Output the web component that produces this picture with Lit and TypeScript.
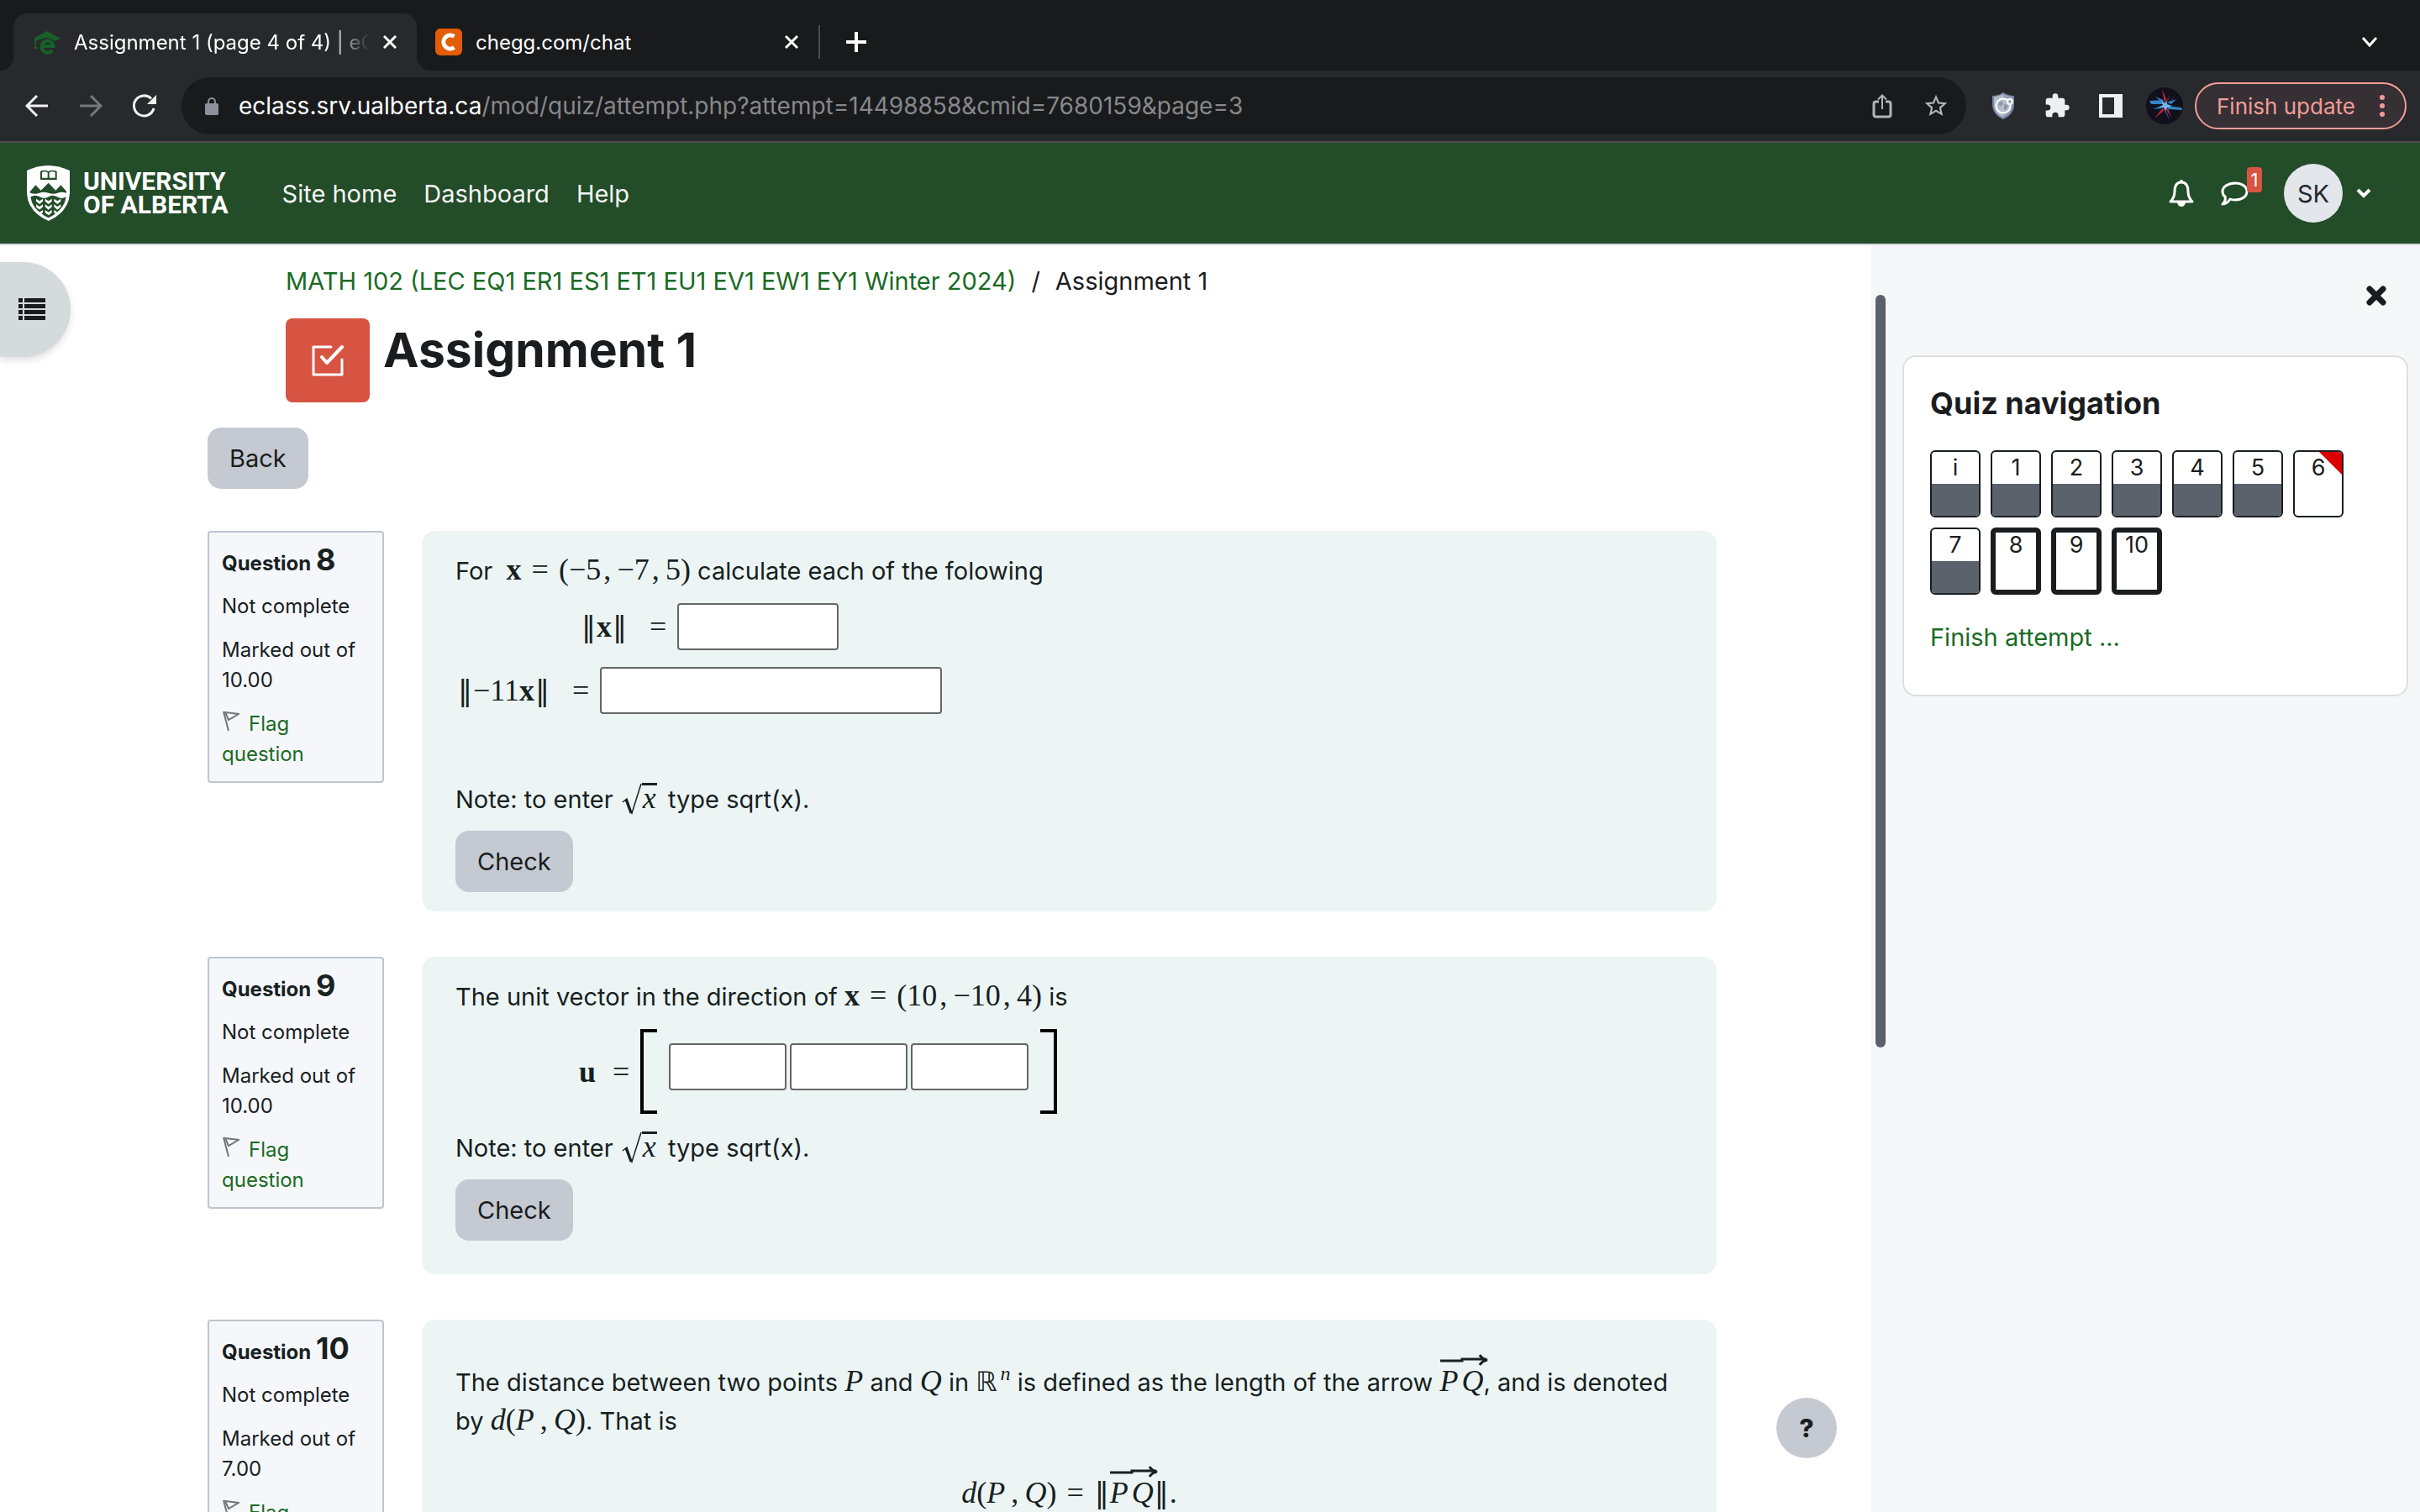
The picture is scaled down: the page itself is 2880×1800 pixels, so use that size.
import { LitElement, html, css, svg } from "lit";
import { customElement, property } from "lit/decorators.js";
import { classMap } from "lit/directives/class-map.js";

const controls = css`
  * {
    box-sizing: border-box;
  }
  button,
  input {
    font: inherit;
    color: inherit;
    margin: 0;
  }
  button {
    border: 0;
    padding: 0;
    background: none;
    cursor: pointer;
  }
  a {
    color: #196b24;
    text-decoration: none;
  }
  svg {
    display: block;
    flex: none;
  }
  .button {
    height: 73px;
    padding: 0 26px;
    border-radius: 16px;
    background: #c4c9d2;
    color: #1a1d20;
    font-size: 29px;
  }
`;

/* ---------- Browser chrome ---------- */

@customElement("browser-bar")
class BrowserBar extends LitElement {
  static styles = [
    controls,
    css`
      :host {
        display: block;
        background: #28292c;
        border-bottom: 2px solid #4e4d52;
        color: #fff;
      }
      .strip {
        display: flex;
        align-items: center;
        height: 84px;
        padding: 16px 50px 0 16px;
        background: #191a1c;
      }
      .tab {
        display: flex;
        align-items: center;
        gap: 16px;
        width: 478px;
        height: 68px;
        padding: 0 24px 0 22px;
        font-size: 24px;
        position: relative;
      }
      .tab.active {
        width: 480px;
        padding-left: 24px;
        background: #28292c;
        border-radius: 16px 16px 0 0;
      }
      .tab.active::before,
      .tab.active::after {
        content: "";
        position: absolute;
        bottom: 0;
        width: 16px;
        height: 16px;
      }
      .tab.active::before {
        left: -16px;
        background: radial-gradient(circle at 0 0, transparent 16px, #28292c 16px);
      }
      .tab.active::after {
        right: -16px;
        background: radial-gradient(circle at 100% 0, transparent 16px, #28292c 16px);
      }
      .label {
        flex: 1;
        overflow: hidden;
        white-space: nowrap;
      }
      .active .label {
        mask-image: linear-gradient(90deg, #000 86%, transparent 100%);
      }
      .divider {
        width: 2px;
        height: 40px;
        background: #4a4b4e;
      }
      .new {
        margin-left: 30px;
      }
      .more {
        margin-left: auto;
      }
      .bar {
        display: flex;
        align-items: center;
        height: 84px;
        padding: 0 16px 0 30px;
      }
      .nav {
        display: flex;
        gap: 36px;
        margin-right: 30px;
      }
      .address {
        flex: 1;
        display: flex;
        align-items: center;
        height: 68px;
        padding: 0 20px 0 28px;
        border-radius: 34px;
        background: #191a1c;
        font-size: 28px;
        white-space: nowrap;
      }
      .url {
        flex: 1;
        margin-left: 24px;
        color: #86888b;
      }
      .host {
        color: #fff;
      }
      .star {
        margin-left: 36px;
      }
      .extensions {
        display: flex;
        align-items: center;
        gap: 34px;
        margin-left: 30px;
      }
      .me {
        margin: 0 14px 0 -6px;
      }
      .update {
        display: flex;
        align-items: center;
        justify-content: space-between;
        width: 252px;
        height: 56px;
        padding: 0 24px;
        border: 2px solid #f29c97;
        border-radius: 28px;
        background: #363034;
        color: #f29c97;
        font-size: 26px;
      }
      .group {
        display: flex;
        align-items: center;
      }
    `,
  ];

  private cross() {
    return html`<svg width="16" height="16" viewBox="0 0 16 16">
      <path d="M1 1 15 15M15 1 1 15" stroke="#fff" stroke-width="3" />
    </svg>`;
  }

  render() {
    return html`
      <div class="strip" role="tablist">
        <div class="tab active" role="tab" aria-selected="true">
          <svg width="32" height="32" viewBox="0 0 32 32">
            <path d="M1 11 16 3 32 12 25 15Q16 8 8 13L3 14V20H1Z" fill="#176128" />
            <path d="M1 21h3v3H1z" fill="#176128" />
            <path d="M22 26A7 7 0 1 1 23.500 21H10" fill="none" stroke="#176128" stroke-width="4" />
          </svg>
          <span class="label">Assignment 1 (page 4 of 4) | eClass</span>
          <button aria-label="Close tab">${this.cross()}</button>
        </div>
        <div class="tab" role="tab" aria-selected="false">
          <svg width="32" height="32" viewBox="0 0 32 32">
            <rect width="32" height="32" rx="6" fill="#e25d04" />
            <path d="M22.500 9.500A8 8 0 1 0 22.500 22.500" fill="none" stroke="#fff" stroke-width="5" />
          </svg>
          <span class="label">chegg.com/chat</span>
          <button aria-label="Close tab">${this.cross()}</button>
        </div>
        <span class="divider"></span>
        <button class="new" aria-label="New tab">
          <svg width="26" height="26" viewBox="0 0 26 26">
            <path d="M13 1V25M1 13H25" stroke="#fff" stroke-width="4" />
          </svg>
        </button>
        <button class="more" aria-label="Search tabs">
          <svg width="20" height="14" viewBox="0 0 20 14">
            <path d="M2 2 10 11 18 2" fill="none" stroke="#fff" stroke-width="3" />
          </svg>
        </button>
      </div>
      <div class="bar">
        <div class="nav">
          <button aria-label="Back">
            <svg width="28" height="28" viewBox="0 0 28 28">
              <path d="M27 14H3M14 2 2 14 14 26" fill="none" stroke="#f1f2f4" stroke-width="3" />
            </svg>
          </button>
          <button aria-label="Forward">
            <svg width="28" height="28" viewBox="0 0 28 28">
              <path d="M1 14H25M14 2 26 14 14 26" fill="none" stroke="#77787b" stroke-width="3" />
            </svg>
          </button>
          <button aria-label="Reload">
            <svg width="28" height="28" viewBox="0 0 28 28">
              <path d="M25 17A12 12 0 1 1 22 5.500" fill="none" stroke="#f1f2f4" stroke-width="3" />
              <path d="M28 1V12H17Z" fill="#f1f2f4" />
            </svg>
          </button>
        </div>
        <div class="address">
          <svg width="16" height="22" viewBox="0 0 16 22">
            <rect y="8" width="16" height="14" rx="2" fill="#8b9099" />
            <path d="M4 9V6a4 4 0 0 1 8 0V9" fill="none" stroke="#8b9099" stroke-width="2" />
          </svg>
          <span class="url" role="textbox" aria-label="Address"
            ><span class="host">eclass.srv.ualberta.ca</span
            >/mod/quiz/attempt.php?attempt=14498858&amp;cmid=7680159&amp;page=3</span
          >
          <button aria-label="Share">
            <svg width="24" height="30" viewBox="0 0 24 30">
              <g fill="none" stroke="#b4b4b5" stroke-width="3">
                <path d="M8 10H4.500Q2 10 2 12.500V25.500Q2 28 4.500 28H19.500Q22 28 22 25.500V12.500Q22 10 19.500 10H16" />
                <path d="M12 19V3M7 7.500 12 2.500 17 7.500" stroke-width="2" />
              </g>
            </svg>
          </button>
          <button class="star" aria-label="Bookmark this tab">
            <svg width="32" height="32" viewBox="0 0 24 24">
              <path
                fill="#b4b4b5"
                d="M22 9.240l-7.190-.620L12 2 9.190 8.630 2 9.240l5.460 4.730L5.820 21 12 17.270 18.180 21l-1.630-7.030L22 9.240zM12 15.400l-3.760 2.270 1-4.280-3.320-2.880 4.380-.380L12 6.100l1.710 4.040 4.380.380-3.320 2.880 1 4.280L12 15.400z"
              />
            </svg>
          </button>
        </div>
        <div class="extensions">
          <svg width="28" height="32" viewBox="0 0 28 32">
            <path d="M14 0Q20 4 27 4V14Q27 26 14 32 1 26 1 14V4Q8 4 14 0Z" fill="#7785a3" />
            <path d="M14 2Q19 5 25 5.500V14Q25 25 14 30Z" fill="#9ba5b8" />
            <path d="M14 2Q9 5 3 5.500V14Q3 25 14 30Z" fill="#b6bcc9" />
            <circle cx="14" cy="16" r="8.500" fill="#b9bfca" stroke="#fff" stroke-width="2" />
            <path d="M8 14Q10 9 14 11L13 15 10 17ZM15 14 20 15 18 20 15 21Z" fill="#8f99ad" />
            <circle cx="22" cy="11" r="3" fill="#9ba5b8" stroke="#fff" stroke-width="2" />
          </svg>
          <svg width="32" height="32" viewBox="0 0 24 24">
            <path
              fill="#eeeff2"
              d="M20.500 11H19V7c0-1.100-.9-2-2-2h-4V3.500a2.500 2.500 0 0 0-5 0V5H4c-1.100 0-2 .9-2 2v3.800h1.500a2.700 2.700 0 0 1 0 5.400H2V20c0 1.100.9 2 2 2h3.800v-1.500a2.700 2.700 0 0 1 5.400 0V22H17c1.100 0 2-.9 2-2v-4h1.500a2.500 2.500 0 0 0 0-5z"
            />
          </svg>
          <svg width="28" height="28" viewBox="0 0 28 28">
            <path fill="#eeeff2" fill-rule="evenodd" d="M0 0H28V28H0ZM4 4V24H18V4Z" />
          </svg>
          <div class="group">
            <svg class="me" width="44" height="44" viewBox="0 0 44 44">
              <circle cx="22" cy="22" r="22" fill="#10101b" />
              <path d="M19 2 24 14 22 20ZM36 8 28 18 25 20ZM10 37 20 24 21 28ZM30 36 26 24 24 26Z" fill="#c2203a" />
              <path d="M4 16 20 15 22 20 6 20ZM11 11 20 15 21 20ZM25 18 36 14 30 20ZM24 22 42 24 43 27 27 26ZM8 26 20 21 18 25Z" fill="#2f86c8" />
              <path d="M18 16 22 19 25 16 25 20 31 22 25 24 23 29 21 24 16 24 20 21Z" fill="#74b6e6" />
              <path d="M24 26 28 40 22 28ZM26 16 29 8 24 16Z" fill="#3a3f6b" />
            </svg>
            <button class="update">
              Finish update
              <svg width="6" height="26" viewBox="0 0 6 26">
                <g fill="#f29c97">
                  <circle cx="3" cy="3" r="3" />
                  <circle cx="3" cy="13" r="3" />
                  <circle cx="3" cy="23" r="3" />
                </g>
              </svg>
            </button>
          </div>
        </div>
      </div>
    `;
  }
}

/* ---------- Site header ---------- */

@customElement("site-header")
class SiteHeader extends LitElement {
  static styles = [
    controls,
    css`
      :host {
        display: flex;
        align-items: center;
        height: 122px;
        padding: 0 58px 0 32px;
        background: #234c29;
        border-bottom: 2px solid #d5dadd;
        color: #fff;
      }
      .brand {
        display: flex;
        align-items: center;
        gap: 16px;
        color: #fff;
        font: 700 30px/28px Roboto, sans-serif;
      }
      nav {
        display: flex;
        gap: 32px;
        margin-left: 64px;
        font-size: 29px;
      }
      nav a {
        color: #f4f6f4;
      }
      .tools {
        display: flex;
        align-items: center;
        margin-left: auto;
      }
      .chat {
        position: relative;
        margin: 0 42px 0 30px;
      }
      .badge {
        position: absolute;
        left: 32px;
        top: -15px;
        width: 18px;
        height: 30px;
        border-radius: 4px;
        background: #d75442;
        font-size: 22px;
        line-height: 30px;
        text-align: center;
      }
      .user {
        display: flex;
        align-items: center;
        gap: 16px;
      }
      .initials {
        width: 70px;
        height: 70px;
        border-radius: 50%;
        background: #e3e6eb;
        color: #24292e;
        font-size: 29px;
        line-height: 72px;
      }
    `,
  ];

  private wheat(x: number, rows: number) {
    return Array.from(
      { length: rows },
      (_, i) => svg`<path d="M${x - 12} ${119 + i * 20}l12 8 12-8v9l-12 10-12-10z" fill="#fff"/>`
    );
  }

  render() {
    return html`
      <a class="brand" href="#home">
        <svg width="51" height="66" viewBox="0 0 153 198">
          <path d="M0 18Q38 0 76 0T153 18V100Q150 165 77 198 3 165 0 100Z" fill="#fff" />
          <path d="M48 21Q62 14 77 21 92 14 107 21V51H48Z" fill="#234c29" />
          <path d="M54 24Q64 19 74 25V44H54ZM80 25Q90 19 101 24V44H80Z" fill="#fff" />
          <path d="M12 98V92L31 70 50 89 77 62 103 89 121 70 141 92V98Q124 92 110 98T77 98 45 98 12 98Z" fill="#234c29" />
          <path d="M13 112Q30 102 46 112T77 112 108 112 140 112Q134 160 77 187 19 160 13 112Z" fill="#234c29" />
          ${this.wheat(45, 3)} ${this.wheat(77, 3)} ${this.wheat(109, 3)}
        </svg>
        <span>UNIVERSITY<br />OF ALBERTA</span>
      </a>
      <nav>
        <a href="#site">Site home</a>
        <a href="#dashboard">Dashboard</a>
        <a href="#help">Help</a>
      </nav>
      <div class="tools">
        <button aria-label="Notifications">
          <svg width="32" height="34" viewBox="0 0 32 34">
            <path d="M16 4C9 4 8 10 8 15 8 21 6 24 3 27H29C26 24 24 21 24 15 24 10 23 4 16 4Z" fill="none" stroke="#fff" stroke-width="3" stroke-linejoin="round" />
            <path d="M11 28H21Q20 33 16 33T11 28Z" fill="#fff" />
            <circle cx="16" cy="3" r="2" fill="#fff" />
          </svg>
        </button>
        <button class="chat" aria-label="Messages">
          <svg width="34" height="32" viewBox="0 0 34 32">
            <path d="M18 4C26 4 32 8 32 14S26 24 18 24C16 24 14 24 12 23 10 26 7 29 3 29 6 26 7 23 6 20 3 18 3 16 3 14 3 8 10 4 18 4Z" fill="none" stroke="#fff" stroke-width="3" stroke-linejoin="round" />
          </svg>
          <span class="badge">1</span>
        </button>
        <button class="user" aria-label="User menu">
          <span class="initials">SK</span>
          <svg width="18" height="12" viewBox="0 0 18 12">
            <path d="M2 2 9 9 16 2" fill="none" stroke="#fff" stroke-width="4" />
          </svg>
        </button>
      </div>
    `;
  }
}

/* ---------- Question ---------- */

@customElement("quiz-question")
class QuizQuestion extends LitElement {
  @property() number = "";
  @property() marks = "";

  static styles = [
    controls,
    css`
      :host {
        display: grid;
        grid-template-columns: 210px 1fr;
        column-gap: 45px;
        align-items: start;
      }
      .info {
        padding: 20px 15px 14px;
        border: 2px solid #bec5d0;
        border-radius: 4px;
        background: #f6f7fa;
        font-size: 24px;
        line-height: 36px;
      }
      h3 {
        margin: 0;
        font-size: 24px;
        line-height: 34px;
      }
      .number {
        font-size: 36px;
        line-height: 24px;
      }
      p {
        margin: 16px 0 0;
      }
      .flag {
        display: inline-block;
        margin-right: 11px;
      }
      .body {
        border-radius: 16px;
        background: #ecf5f4;
        padding: 25px 40px 23px;
      }
    `,
  ];

  render() {
    return html`
      <div class="info">
        <h3>Question <span class="number">${this.number}</span></h3>
        <p>Not complete</p>
        <p>Marked out of ${this.marks}</p>
        <p>
          <a href="#flag"
            ><svg class="flag" width="21" height="24" viewBox="0 0 21 24">
              <g fill="none" stroke="#72767b" stroke-width="2">
                <path d="M2 1 8 24" />
                <path d="M4 2 20 4 8 11Z" />
              </g></svg
            >Flag question</a
          >
        </p>
      </div>
      <div class="body"><slot></slot></div>
    `;
  }
}

/* ---------- Quiz navigation drawer ---------- */

type Cell = { label: string; state: "done" | "open" | "flagged" | "current" };

const cells: Cell[] = [
  ...["i", "1", "2", "3", "4", "5"].map((label): Cell => ({ label, state: "done" })),
  { label: "6", state: "flagged" },
  { label: "7", state: "done" },
  ...["8", "9", "10"].map((label): Cell => ({ label, state: "current" })),
];

@customElement("quiz-drawer")
class QuizDrawer extends LitElement {
  static styles = [
    controls,
    css`
      :host {
        display: flex;
        gap: 20px;
        padding: 48px 14px 0 6px;
        background: #f6f7f9;
      }
      .thumb {
        width: 12px;
        height: 896px;
        margin-top: 11px;
        border-radius: 6px;
        background: #5b626b;
      }
      .column {
        flex: 1;
      }
      .close {
        display: block;
        margin: 0 26px 59px auto;
      }
      .card {
        padding: 33px 31px 45px;
        border: 2px solid #dedfe1;
        border-radius: 16px;
        background: #fff;
      }
      h2 {
        margin: 0;
        font-size: 36px;
        line-height: 44px;
      }
      .grid {
        display: grid;
        grid-template-columns: repeat(7, 60px);
        gap: 12px;
        margin: 34px 0 28px;
      }
      .cell {
        position: relative;
        display: flex;
        flex-direction: column;
        height: 80px;
        overflow: hidden;
        border: 2px solid #1a1d20;
        border-radius: 6px;
        background: #fff;
        color: #1a1d20;
        font-size: 27px;
        line-height: 38px;
        text-align: center;
      }
      .done::after {
        content: "";
        flex: 1;
        background: #5b626b;
      }
      .current {
        border-width: 6px;
        line-height: 30px;
      }
      .flagged::after {
        content: "";
        position: absolute;
        top: 0;
        right: 0;
        width: 27px;
        height: 27px;
        background: #dc0000;
        clip-path: polygon(0 0, 100% 0, 100% 100%);
      }
      .finish {
        display: block;
        font-size: 29px;
        line-height: 46px;
      }
    `,
  ];

  render() {
    return html`
      <div class="thumb"></div>
      <div class="column">
        <button class="close" aria-label="Close drawer">
          <svg width="24" height="24" viewBox="0 0 24 24">
            <path d="M4 4 20 20M20 4 4 20" stroke="#1a1d20" stroke-width="7" stroke-linecap="round" />
          </svg>
        </button>
        <section class="card">
          <h2>Quiz navigation</h2>
          <div class="grid">
            ${cells.map(
              (c) => html`<a href="#q${c.label}" class=${classMap({ cell: true, [c.state]: true })}>${c.label}</a>`
            )}
          </div>
          <a class="finish" href="#finish">Finish attempt ...</a>
        </section>
      </div>
    `;
  }
}

/* ---------- Page ---------- */

@customElement("app-root")
class AppRoot extends LitElement {
  static styles = [
    controls,
    css`
      :host {
        display: flex;
        flex-direction: column;
        height: 100vh;
        overflow: hidden;
        background: #fff;
        color: #1a1d20;
        font-family: Inter, "Liberation Sans", sans-serif;
      }
      .page {
        flex: 1;
        min-height: 0;
        display: grid;
        grid-template-columns: 1fr 654px;
        position: relative;
        overflow: hidden;
      }
      .index {
        position: absolute;
        left: 0;
        top: 20px;
        width: 84px;
        height: 113px;
        padding: 0 0 2px 22px;
        border-radius: 0 57px 57px 0;
        background: #d5dadd;
        box-shadow: 0 4px 8px rgba(0, 0, 0, 0.12);
      }
      .help {
        position: absolute;
        right: 694px;
        bottom: 64px;
        width: 72px;
        height: 72px;
        border-radius: 50%;
        background: #c4c9d2;
        font-size: 30px;
        font-weight: 800;
      }
      main {
        min-width: 0;
        overflow: hidden;
        padding: 20px 183px 0 247px;
        font-size: 29px;
        line-height: 46px;
      }
      .heading {
        padding-left: 93px;
      }
      .crumbs {
        display: flex;
        gap: 18px;
        color: #1a1d20;
      }
      .title {
        display: flex;
        gap: 16px;
        margin: 21px 0 30px;
      }
      .icon {
        display: grid;
        place-items: center;
        width: 100px;
        height: 100px;
        border-radius: 8px;
        background: #d75442;
      }
      h1 {
        margin: 0;
        font-size: 57px;
        line-height: 76px;
      }
      .questions {
        display: grid;
        gap: 54px;
        margin-top: 50px;
        color: #17211f;
      }
      p {
        margin: 0;
      }
      .m {
        font-family: "Liberation Serif", serif;
        font-size: 36px;
        line-height: 40px;
        white-space: nowrap;
      }
      .eq {
        margin: 0 12px;
      }
      .bars {
        padding: 0 1px;
        font-family: "DejaVu Sans", sans-serif;
        font-size: 34px;
      }
      .r {
        font-family: "DejaVu Sans", sans-serif;
        font-size: 32px;
        line-height: 40px;
      }
      .m sup {
        font-size: 24px;
        line-height: 0;
        margin-left: 4px;
      }
      .root {
        display: inline-flex;
        align-items: baseline;
        line-height: 30px;
        margin: 0 5px 0 2px;
      }
      .radical {
        width: 24px;
        height: 38px;
        align-self: flex-end;
        margin: 0 0 -4px;
      }
      .radicand {
        border-top: 3px solid #17211f;
        padding: 0 1px;
      }
      .vector {
        position: relative;
      }
      .vector i + i {
        padding-left: 4px;
      }
      .arrow {
        position: absolute;
        left: 0;
        bottom: 38px;
      }
      .row {
        display: flex;
        align-items: center;
        gap: 13px;
      }
      .row .eq {
        margin: 0 0 0 17px;
      }
      .norm {
        padding-left: 149px;
        margin: 15px 0 20px;
      }
      .scaled {
        padding-left: 2px;
        margin-bottom: 79px;
      }
      .answer {
        height: 56px;
        border: 2px solid #666;
        border-radius: 4px;
        background: #fff;
      }
      .short {
        width: 192px;
      }
      .long {
        width: 407px;
      }
      .entry {
        width: 140px;
      }
      .unit {
        padding-left: 147px;
        margin: 15px 0 18px;
      }
      .bracket {
        display: flex;
        justify-content: space-between;
        gap: 4px;
        height: 101px;
        padding: 17px 34px;
        background:
          linear-gradient(#000 0 0) 0 0 / 4px 100%,
          linear-gradient(#000 0 0) 0 0 / 20px 4px,
          linear-gradient(#000 0 0) 0 100% / 20px 4px,
          linear-gradient(#000 0 0) 100% 0 / 4px 100%,
          linear-gradient(#000 0 0) 100% 0 / 20px 4px,
          linear-gradient(#000 0 0) 100% 100% / 20px 4px;
        background-repeat: no-repeat;
      }
      .check {
        display: block;
        margin-top: 14px;
      }
      .spaced {
        margin-bottom: 17px;
      }
      .define {
        padding: 27px 0 60px;
      }
      .display {
        margin-top: 41px;
        text-align: center;
      }
    `,
  ];

  private bars() {
    return html`<span class="bars">‖</span>`;
  }

  private pair() {
    return html`<i>d</i>(<i>P</i>&thinsp;,&thinsp;<i>Q</i>)`;
  }

  private tuple(...values: string[]) {
    return html`(${values.join("\u200a,\u2009")})`;
  }

  private vector() {
    return html`<span class="vector"
      ><svg class="arrow" width="58" height="14" viewBox="0 0 58 14">
        <path d="M0 8H26V6H55M47 1Q50 6 56 7 50 8 47 13" fill="none" stroke="#17211f" stroke-width="3" /></svg
      ><i>P</i><i>Q</i></span
    >`;
  }

  private note() {
    return html`<p>
      Note: to enter
      <span class="m root"
        ><svg class="radical" viewBox="0 0 24 38" role="img" aria-label="square root of">
          <path d="M1 23 6 19 12 36 23 1" fill="none" stroke="#17211f" stroke-width="1.500" />
          <path d="M5 20 11 36" stroke="#17211f" stroke-width="3" /></svg
        ><span class="radicand"><i>x</i></span></span
      >
      type sqrt(x).
    </p>`;
  }

  render() {
    return html`
      <browser-bar></browser-bar>
      <site-header></site-header>
      <div class="page">
        <main>
          <div class="heading">
            <div class="crumbs">
              <a href="#course">MATH 102 (LEC EQ1 ER1 ES1 ET1 EU1 EV1 EW1 EY1 Winter 2024)</a>
              <span>/</span><span>Assignment 1</span>
            </div>
            <div class="title">
              <span class="icon">
                <svg width="38" height="38" viewBox="0 0 38 38">
                  <g fill="none" stroke="#fff" stroke-width="3" stroke-linecap="round" stroke-linejoin="round">
                    <path d="M23 3H2V36H36V18" />
                    <path d="M12 15 18 22 36 3" stroke-width="4" />
                  </g>
                </svg>
              </span>
              <h1>Assignment 1</h1>
            </div>
          </div>
          <button class="button">Back</button>
          <div class="questions">
            <quiz-question number="8" marks="10.00">
              <p>
                For &nbsp;<span class="m"><b>x</b><span class="eq">=</span>${this.tuple("−5", "−7", "5")}</span>
                calculate each of the folowing
              </p>
              <label class="row norm">
                <span class="m">${this.bars()}<b>x</b>${this.bars()} <span class="eq">=</span></span>
                <input class="answer short" />
              </label>
              <label class="row scaled">
                <span class="m">${this.bars()}−11<b>x</b>${this.bars()} <span class="eq">=</span></span>
                <input class="answer long" />
              </label>
              ${this.note()}
              <button class="button check">Check</button>
            </quiz-question>
            <quiz-question number="9" marks="10.00">
              <p>
                The unit vector in the direction of
                <span class="m"><b>x</b><span class="eq">=</span>${this.tuple("10", "−10", "4")}</span> is
              </p>
              <div class="row unit">
                <span class="m"><b>u</b>&hairsp;<span class="eq">=</span></span>
                <div class="bracket">
                  ${[1, 2, 3].map((n) => html`<input class="answer entry" aria-label="Component ${n}" />`)}
                </div>
              </div>
              ${this.note()}
              <button class="button check spaced">Check</button>
            </quiz-question>
            <quiz-question number="10" marks="7.00">
              <div class="define">
                <p>
                  The distance between two points <span class="m"><i>P</i></span> and
                  <span class="m"><i>Q</i></span> in
                  <span class="m"><span class="r">ℝ</span><sup><i>n</i></sup></span> is defined as the length of the
                  arrow <span class="m">${this.vector()}</span>, and is denoted by
                  <span class="m">${this.pair()}</span>. That is
                </p>
                <p class="display">
                  <span class="m"
                    >${this.pair()}<span class="eq">=</span>${this.bars()}${this.vector()}${this.bars()}.</span
                  >
                </p>
              </div>
            </quiz-question>
          </div>
        </main>
        <quiz-drawer></quiz-drawer>
        <button class="index" aria-label="Open course index">
          <svg width="32" height="26" viewBox="0 0 32 26">
            <path
              d="M0 0H5V5H0ZM7 0H32V5H7ZM0 7H5V12H0ZM7 7H32V12H7ZM0 14H5V19H0ZM7 14H32V19H7ZM0 21H5V26H0ZM7 21H32V26H7Z"
              fill="#1a1d20"
            />
          </svg>
        </button>
        <button class="help" aria-label="Help and support">?</button>
      </div>
    `;
  }
}
